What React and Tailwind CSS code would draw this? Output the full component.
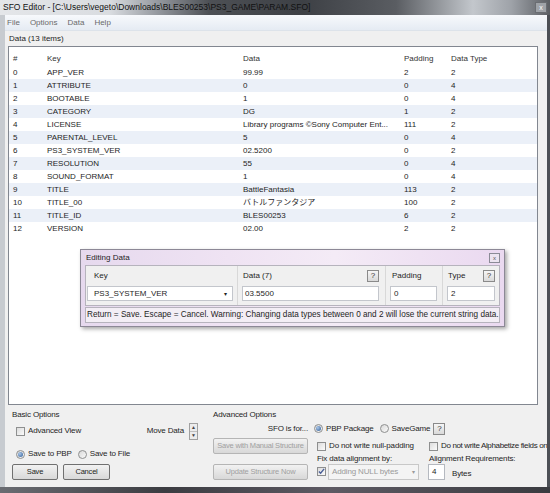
import React from 'react';

const rows = [
  [0, 'APP_VER', '99.99', 2, 2],
  [1, 'ATTRIBUTE', '0', 0, 4],
  [2, 'BOOTABLE', '1', 0, 4],
  [3, 'CATEGORY', 'DG', 1, 2],
  [4, 'LICENSE', 'Library programs ©Sony Computer Ent...', 111, 2],
  [5, 'PARENTAL_LEVEL', '5', 0, 4],
  [6, 'PS3_SYSTEM_VER', '02.5200', 0, 2],
  [7, 'RESOLUTION', '55', 0, 4],
  [8, 'SOUND_FORMAT', '1', 0, 4],
  [9, 'TITLE', 'BattleFantasia', 113, 2],
  [10, 'TITLE_00', 'バトルファンタジア', 100, 2],
  [11, 'TITLE_ID', 'BLES00253', 6, 2],
  [12, 'VERSION', '02.00', 2, 2],
];

const Check = ({ checked }) => (
  <span className="flex h-[9px] w-[9px] shrink-0 items-center justify-center border border-[#8e8f8f] bg-gradient-to-br from-[#dcdcdc] to-[#fbfbfb]">
    {checked && (
      <svg viewBox="0 0 8 8" className="h-[7px] w-[7px]">
        <path d="M1 4 L3 6 L7 1" fill="none" stroke="#4a5f97" strokeWidth="1.6" />
      </svg>
    )}
  </span>
);

const Radio = ({ on }) => (
  <span className="flex h-[9px] w-[9px] shrink-0 items-center justify-center rounded-full border border-[#8e8f8f] bg-gradient-to-br from-[#d8d8d8] to-[#fafafa]">
    {on && <span className="h-[5px] w-[5px] rounded-full bg-[radial-gradient(circle_at_35%_35%,#a9c6e8,#2f5c95)]" />}
  </span>
);

const Help = () => (
  <span className="flex h-[12px] w-[12px] items-center justify-center border border-[#8a8a8a] bg-gradient-to-b from-[#f6f6f6] to-[#d9d9d9] text-[8px] leading-none text-[#333]">
    ?
  </span>
);

const Btn = ({ children, w, disabled }) => (
  <div
    className={`flex h-[16px] shrink-0 items-center justify-center overflow-hidden whitespace-nowrap rounded-[2px] border text-[7.5px] tracking-[-0.2px] ${disabled ? 'border-[#b5b5b5] text-[#a0a0a0]' : 'border-[#707070] text-[#222]'} bg-gradient-to-b from-[#f2f2f2] to-[#d8d8d8]`}
    style={{ width: w }}
  >
    {children}
  </div>
);

export default function App() {
  return (
    <div className="relative flex h-[493px] w-[550px] flex-col overflow-hidden bg-[#55585e] font-['Liberation_Sans','Noto_Sans_CJK_JP',Arial,sans-serif] text-[8px] leading-none text-[#1e1e1e]">
      {/* title bar */}
      <div className="flex h-[15px] shrink-0 items-center bg-[linear-gradient(90deg,#e4e6e9_0%,#d9dce0_20%,#9a9ea4_28%,#4d5055_38%,#3d4045_55%,#5a5d62_72%,#c3c7cc_86%,#9ea2a8_93%,#5b5e63_100%)] pl-[3px] pr-[3px]">
        <span className="text-[8.5px] text-[#111]">SFO Editor - [C:\Users\vegeto\Downloads\BLES00253\PS3_GAME\PARAM.SFO]</span>
        <span className="ml-auto flex h-[11px] w-[12px] items-center justify-center border border-[#6a6d72] bg-[#9fa3a8] text-[7px] text-white">x</span>
      </div>

      <div className="flex min-h-0 flex-1">
        <div className="w-[5px] shrink-0 bg-[#c7cbd0]" />
        <div className="flex min-w-0 flex-1 flex-col bg-[#f0f0f0]">
          {/* menu */}
          <div className="flex h-[16px] shrink-0 items-center gap-[10px] border-b border-[#dde3ea] bg-gradient-to-b from-[#f7f9fc] to-[#e5ebf3] pl-[2px] text-[#6a6a6a]">
            <span>File</span>
            <span>Options</span>
            <span>Data</span>
            <span>Help</span>
          </div>

          <div className="flex h-[15px] shrink-0 items-center pl-[4px] pt-[1px]">Data (13 items)</div>

          {/* table */}
          <div className="mr-[9px] ml-[3px] flex h-[359px] shrink-0 flex-col border border-[#828790] bg-white">
            <div className="flex h-[19px] shrink-0 items-center pl-[4px] pt-[4px] text-[#333]">
              <span className="w-[34px]">#</span>
              <span className="w-[196px]">Key</span>
              <span className="w-[161px]">Data</span>
              <span className="w-[47px]">Padding</span>
              <span>Data Type</span>
            </div>
            {rows.map((r, i) => (
              <div key={r[0]} className={`flex h-[13px] shrink-0 items-center pl-[4px] ${i % 2 ? 'bg-[#ebf0f8]' : 'bg-white'}`}>
                <span className="w-[34px]">{r[0]}</span>
                <span className="w-[196px]">{r[1]}</span>
                <span className="w-[161px] whitespace-nowrap">{r[2]}</span>
                <span className="w-[47px]">{r[3]}</span>
                <span>{r[4]}</span>
              </div>
            ))}
          </div>

          {/* bottom options */}
          <div className="flex min-h-0 flex-1 tracking-[-0.15px]">
            <div className="flex w-[193px] shrink-0 flex-col pl-[7px] pt-[4px]">
              <div className="flex h-[12px] items-center">Basic Options</div>
              <div className="flex h-[20px] items-center pl-[4px]">
                <Check />
                <span className="ml-[3px]">Advanced View</span>
                <span className="ml-auto">Move Data</span>
                <div className="ml-[5px] flex h-[17px] w-[9px] flex-col border border-[#a0a0a0] bg-[#ececec] text-[5px] text-[#444]">
                  <span className="flex flex-1 items-center justify-center border-b border-[#c0c0c0]">▲</span>
                  <span className="flex flex-1 items-center justify-center">▼</span>
                </div>
              </div>
              <div className="mt-[6px] flex h-[14px] items-center pl-[4px]">
                <Radio on />
                <span className="ml-[3px]">Save to PBP</span>
                <span className="ml-[6px]">
                  <Radio />
                </span>
                <span className="ml-[3px]">Save to File</span>
              </div>
              <div className="mt-[3px] flex gap-[5px]">
                <Btn w={46}>Save</Btn>
                <Btn w={47}>Cancel</Btn>
              </div>
            </div>

            <div className="flex min-w-0 flex-1 flex-col overflow-hidden pl-[15px] pt-[4px]">
              <div className="flex h-[12px] items-center">Advanced Options</div>
              <div className="flex h-[15px] items-center whitespace-nowrap">
                <span className="w-[95px] shrink-0 text-right">SFO is for...</span>
                <span className="ml-[6px] shrink-0">
                  <Radio on />
                </span>
                <span className="ml-[3px]">PBP Package</span>
                <span className="ml-[6px]">
                  <Radio />
                </span>
                <span className="ml-[3px]">SaveGame</span>
                <span className="ml-[3px]">
                  <Help />
                </span>
              </div>
              <div className="mt-[2px] flex h-[16px] items-center whitespace-nowrap">
                <Btn w={95} disabled>
                  Save with Manual Structure
                </Btn>
                <span className="ml-[9px] shrink-0">
                  <Check />
                </span>
                <span className="ml-[3px] w-[100px] shrink-0 overflow-hidden">Do not write null-padding</span>
                <Check />
                <span className="ml-[3px] tracking-[-0.35px]">Do not write Alphabetize fields on S</span>
              </div>
              <div className="flex h-[9px] items-center whitespace-nowrap">
                <span className="w-[104px] shrink-0" />
                <span className="w-[112px] shrink-0">Fix data alignment by:</span>
                <span>Alignment Requirements:</span>
              </div>
              <div className="flex h-[17px] items-center whitespace-nowrap">
                <Btn w={95} disabled>
                  Update Structure Now
                </Btn>
                <span className="ml-[9px] shrink-0">
                  <Check checked />
                </span>
                <div className="ml-[2px] flex h-[16px] w-[91px] shrink-0 items-center border border-[#c8c8c8] bg-[#f4f4f4] pl-[3px] pr-[3px] text-[#9a9a9a]">
                  Adding NULL bytes
                  <span className="ml-auto text-[6px]">▾</span>
                </div>
                <div className="ml-[9px] flex h-[16px] w-[17px] shrink-0 items-center border border-[#b5b9c0] bg-white pl-[3px]">4</div>
                <span className="ml-[7px] pt-[5px]">Bytes</span>
              </div>
            </div>
          </div>
        </div>
        <div className="w-[3px] shrink-0 bg-[#4c4f55]" />
      </div>
      <div className="h-[6px] shrink-0 bg-[linear-gradient(90deg,#6a6c72,#3b3c41_30%,#5d5a63_60%,#3a3b40)]" />

      {/* Editing Data dialog */}
      <div className="absolute left-[80px] top-[249px] flex h-[78px] w-[425px] flex-col border border-[#8c8896] bg-[linear-gradient(90deg,#e6d9ee_0%,#efe3f3_35%,#f4ebf6_60%,#ead9f0_100%)] px-[4px] shadow-[2px_2px_4px_rgba(0,0,0,0.35)]">
        <div className="flex h-[15px] shrink-0 items-center pl-[1px]">
          <span className="text-[8px]">Editing Data</span>
          <span className="ml-auto flex h-[10px] w-[11px] items-center justify-center border border-[#8b8b96] bg-[#ece4f0] text-[6px] text-[#555]">x</span>
        </div>
        <div className="flex h-[41px] shrink-0 border border-[#b6b3bd] bg-[#f0f0f0]">
          <div className="flex w-[152px] flex-col border-r border-[#d8d8d8] pl-[1px] pr-[4px]">
            <span className="mt-[6px] h-[10px] pl-[7px]">Key</span>
            <div className="mt-[4px] flex h-[15px] items-center border border-[#c3c6cc] bg-white pl-[6px] pr-[5px]">
              PS3_SYSTEM_VER
              <span className="ml-auto text-[6px]">▾</span>
            </div>
          </div>
          <div className="flex w-[148px] flex-col border-r border-[#d8d8d8] pl-[4px] pr-[6px]">
            <div className="mt-[4px] flex h-[12px] items-center pl-[1px]">
              Data (7)
              <span className="ml-auto">
                <Help />
              </span>
            </div>
            <div className="mt-[4px] flex h-[15px] items-center border border-[#c3c6cc] bg-white pl-[2px]">03.5500</div>
          </div>
          <div className="flex w-[57px] flex-col border-r border-[#d8d8d8] pl-[4px] pr-[5px]">
            <span className="mt-[6px] h-[10px] pl-[2px]">Padding</span>
            <div className="mt-[4px] flex h-[15px] items-center border border-[#c3c6cc] bg-white pl-[3px]">0</div>
          </div>
          <div className="flex flex-1 flex-col pl-[4px] pr-[4px]">
            <div className="mt-[4px] flex h-[12px] items-center pl-[1px]">
              Type
              <span className="ml-auto">
                <Help />
              </span>
            </div>
            <div className="mt-[4px] flex h-[15px] items-center border border-[#c3c6cc] bg-white pl-[3px]">2</div>
          </div>
        </div>
        <div className="mt-[1px] flex h-[16px] shrink-0 items-center whitespace-nowrap border border-[#b6b3bd] bg-[#f3eef5] pl-[1px] text-[8.2px]">
          Return = Save. Escape = Cancel. Warning: Changing data types between 0 and 2 will lose the current string data.
        </div>
      </div>
    </div>
  );
}
